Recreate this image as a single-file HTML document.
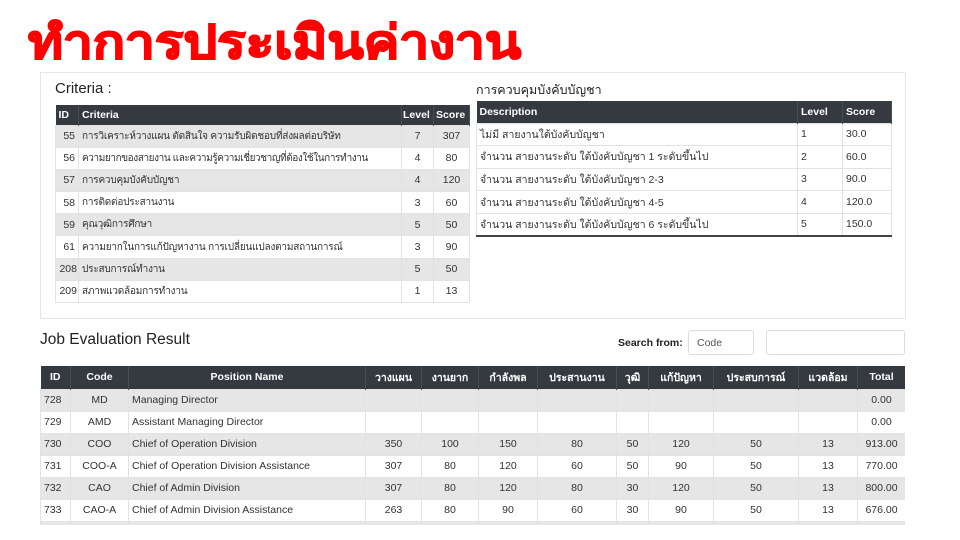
<!DOCTYPE html>
<html><head><meta charset="utf-8"><style>
*{box-sizing:border-box;margin:0;padding:0}
body{width:960px;height:540px;overflow:hidden;background:#fff;font-family:"Liberation Sans","DejaVu Sans",sans-serif;color:#333;position:relative}
.abs{position:absolute}
h1{position:absolute;left:28px;top:14px;font-size:46px;font-weight:900;color:#f00;line-height:56px;font-family:"Liberation Sans",sans-serif;transform:scaleX(1.155);transform-origin:0 0;-webkit-text-stroke:1.5px #f00;white-space:nowrap}
.panel{left:40px;top:72px;width:866px;height:247px;border:1px solid #e6e6e6}
table{border-collapse:collapse;position:absolute;font-size:10.5px;table-layout:fixed}
th{background:#343a40;color:#fff;font-weight:bold;text-align:left;padding:0 3px;border-right:1px solid #454d55}
td{padding:0 3px;border:1px solid #e2e2e2;white-space:nowrap;overflow:hidden}
.c{text-align:center}.r{text-align:right}
.st tr:nth-child(odd) td{background:#e6e6e6}
.th{font-size:10px;letter-spacing:-0.2px}
</style></head><body>
<h1>ทำการประเมินค่างาน</h1>
<div class="abs panel"></div>
<div class="abs" style="left:55px;top:80px;font-size:15px;color:#222">Criteria :</div>
<table class="st" style="left:55px;top:105px;width:414px">
<colgroup><col style="width:23px"><col style="width:323px"><col style="width:32px"><col style="width:36px"></colgroup>
<thead><tr style="height:20px"><th>ID</th><th>Criteria</th><th style="padding:0 1px">Level</th><th style="padding:0 2px">Score</th></tr></thead>
<tbody>
<tr style="height:22.2px"><td class="r">55</td><td class="th">การวิเคราะห์วางแผน ตัดสินใจ ความรับผิดชอบที่ส่งผลต่อบริษัท</td><td class="c">7</td><td class="c">307</td></tr>
<tr style="height:22.2px"><td class="r">56</td><td class="th" style="letter-spacing:-0.4px">ความยากของสายงาน และความรู้ความเชี่ยวชาญที่ต้องใช้ในการทำงาน</td><td class="c">4</td><td class="c">80</td></tr>
<tr style="height:22.2px"><td class="r">57</td><td class="th">การควบคุมบังคับบัญชา</td><td class="c">4</td><td class="c">120</td></tr>
<tr style="height:22.2px"><td class="r">58</td><td class="th">การติดต่อประสานงาน</td><td class="c">3</td><td class="c">60</td></tr>
<tr style="height:22.2px"><td class="r">59</td><td class="th">คุณวุฒิการศึกษา</td><td class="c">5</td><td class="c">50</td></tr>
<tr style="height:22.2px"><td class="r">61</td><td class="th">ความยากในการแก้ปัญหางาน การเปลี่ยนแปลงตามสถานการณ์</td><td class="c">3</td><td class="c">90</td></tr>
<tr style="height:22.2px"><td class="r" style="padding:0 1px">208</td><td class="th">ประสบการณ์ทำงาน</td><td class="c">5</td><td class="c">50</td></tr>
<tr style="height:22.2px"><td class="r" style="padding:0 1px">209</td><td class="th">สภาพแวดล้อมการทำงาน</td><td class="c">1</td><td class="c">13</td></tr>
</tbody></table>
<div class="abs" style="left:476px;top:80px;font-size:12.5px;color:#222">การควบคุมบังคับบัญชา</div>
<table style="left:476px;top:101px;width:415px;border-bottom:2px solid #444">
<colgroup><col style="width:321px"><col style="width:45px"><col style="width:49px"></colgroup>
<thead><tr style="height:22px"><th>Description</th><th>Level</th><th>Score</th></tr></thead>
<tbody>
<tr style="height:22.6px"><td>ไม่มี สายงานใต้บังคับบัญชา</td><td>1</td><td>30.0</td></tr>
<tr style="height:22.6px"><td>จำนวน สายงานระดับ ใต้บังคับบัญชา 1 ระดับขึ้นไป</td><td>2</td><td>60.0</td></tr>
<tr style="height:22.6px"><td>จำนวน สายงานระดับ ใต้บังคับบัญชา 2-3</td><td>3</td><td>90.0</td></tr>
<tr style="height:22.6px"><td>จำนวน สายงานระดับ ใต้บังคับบัญชา 4-5</td><td>4</td><td>120.0</td></tr>
<tr style="height:22.6px"><td>จำนวน สายงานระดับ ใต้บังคับบัญชา 6 ระดับขึ้นไป</td><td>5</td><td>150.0</td></tr>
</tbody></table>
<div class="abs" style="left:40px;top:331px;font-size:15.5px;color:#222">Job Evaluation Result</div>
<div class="abs" style="left:618px;top:337px;font-size:10.5px;font-weight:bold;color:#222">Search from:</div>
<div class="abs" style="left:688px;top:330px;width:66px;height:25px;border:1px solid #ddd;border-radius:3px;font-size:10.5px;padding:6px 8px;color:#555">Code</div>
<div class="abs" style="left:766px;top:330px;width:139px;height:25px;border:1px solid #ddd;border-radius:3px"></div>
<div class="abs" style="left:40px;top:366px;width:865px;height:159px;overflow:hidden">
<table class="st" style="left:0;top:0;width:865px">
<colgroup><col style="width:30px"><col style="width:58px"><col style="width:237px"><col style="width:56px"><col style="width:57px"><col style="width:59px"><col style="width:79px"><col style="width:32px"><col style="width:65px"><col style="width:85px"><col style="width:59px"><col style="width:48px"></colgroup>
<thead><tr style="height:23px"><th class="c">ID</th><th class="c">Code</th><th class="c">Position Name</th><th class="c">วางแผน</th><th class="c">งานยาก</th><th class="c">กำลังพล</th><th class="c">ประสานงาน</th><th class="c">วุฒิ</th><th class="c">แก้ปัญหา</th><th class="c">ประสบการณ์</th><th class="c">แวดล้อม</th><th class="c">Total</th></tr></thead>
<tbody>
<tr style="height:22px"><td>728</td><td class="c">MD</td><td>Managing Director</td><td></td><td></td><td></td><td></td><td></td><td></td><td></td><td></td><td class="c">0.00</td></tr>
<tr style="height:22px"><td>729</td><td class="c">AMD</td><td>Assistant Managing Director</td><td></td><td></td><td></td><td></td><td></td><td></td><td></td><td></td><td class="c">0.00</td></tr>
<tr style="height:22px"><td>730</td><td class="c">COO</td><td>Chief of Operation Division</td><td class="c">350</td><td class="c">100</td><td class="c">150</td><td class="c">80</td><td class="c">50</td><td class="c">120</td><td class="c">50</td><td class="c">13</td><td class="c">913.00</td></tr>
<tr style="height:22px"><td>731</td><td class="c">COO-A</td><td>Chief of Operation Division Assistance</td><td class="c">307</td><td class="c">80</td><td class="c">120</td><td class="c">60</td><td class="c">50</td><td class="c">90</td><td class="c">50</td><td class="c">13</td><td class="c">770.00</td></tr>
<tr style="height:22px"><td>732</td><td class="c">CAO</td><td>Chief of Admin Division</td><td class="c">307</td><td class="c">80</td><td class="c">120</td><td class="c">80</td><td class="c">30</td><td class="c">120</td><td class="c">50</td><td class="c">13</td><td class="c">800.00</td></tr>
<tr style="height:22px"><td>733</td><td class="c">CAO-A</td><td>Chief of Admin Division Assistance</td><td class="c">263</td><td class="c">80</td><td class="c">90</td><td class="c">60</td><td class="c">30</td><td class="c">90</td><td class="c">50</td><td class="c">13</td><td class="c">676.00</td></tr>
<tr style="height:22px"><td></td><td></td><td></td><td></td><td></td><td></td><td></td><td></td><td></td><td></td><td></td><td></td></tr>
</tbody></table></div>
</body></html>
